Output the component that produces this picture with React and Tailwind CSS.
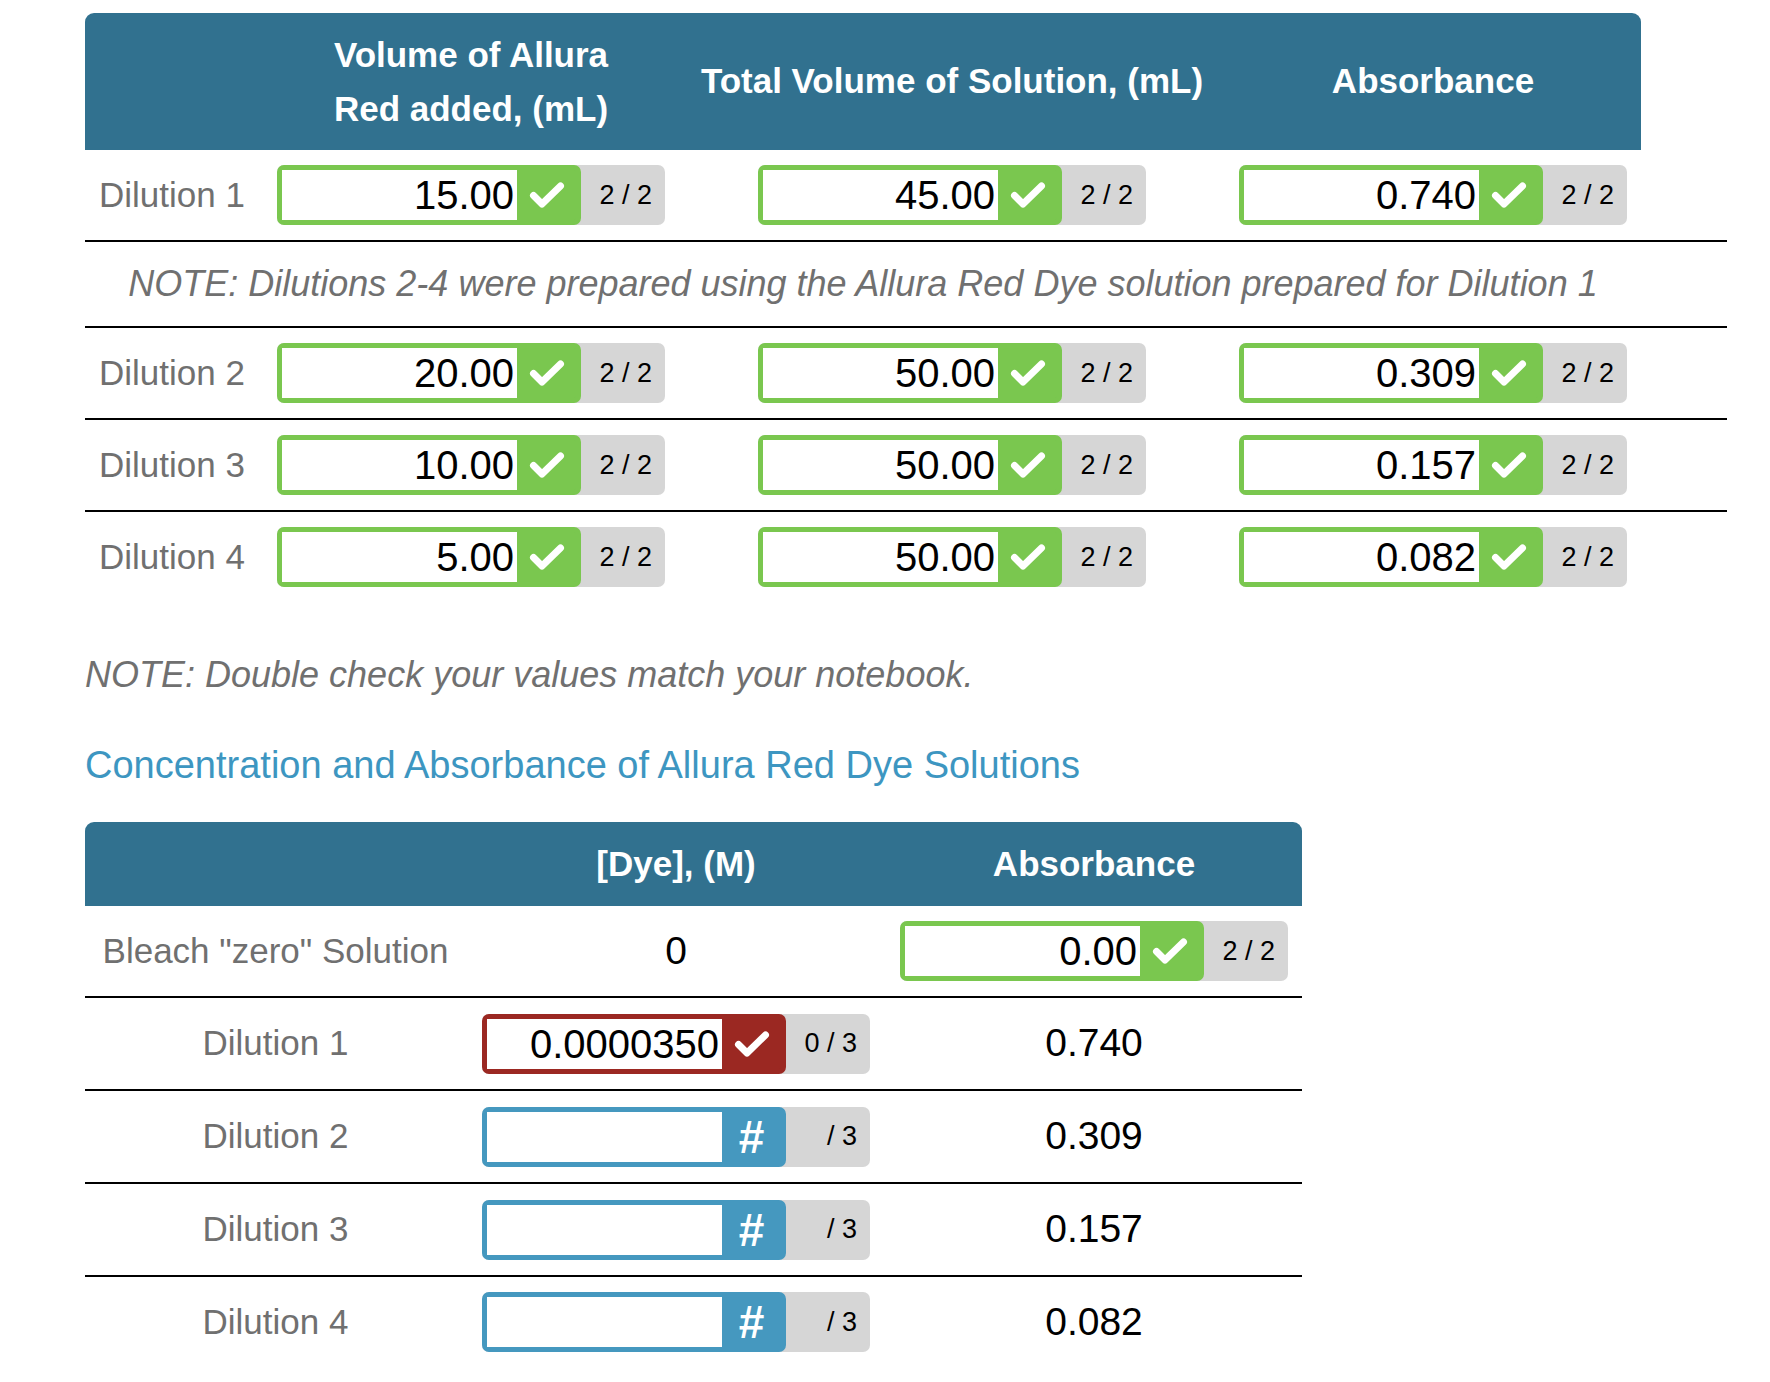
import React from "react";

const variants = {
  green: "border-[#7ac74f] bg-[#7ac74f]",
  red: "border-[#9b2822] bg-[#9b2822]",
  blue: "border-[#4598bf] bg-[#4598bf]",
};

function CheckIcon() {
  return (
    <svg width="36" height="28" viewBox="0 0 36 28">
      <polyline
        points="4.5,14.5 13,23 31.5,5"
        fill="none"
        stroke="white"
        strokeWidth="7"
        strokeLinecap="round"
        strokeLinejoin="round"
      />
    </svg>
  );
}

// input + feedback icon + score
function Answer({ value = "", variant = "green", score = "", max }) {
  return (
    <div className="flex h-[60px] w-[388px] shrink-0 rounded-[7px] bg-[#d6d6d6]">
      <div className={"flex w-[304px] h-full rounded-[7px] border-[5px] " + variants[variant]}>
        <div className="flex-1 bg-white flex items-center justify-end pr-[3px] text-[40px] leading-none text-black">
          {value}
        </div>
        <div className="w-[59px] flex items-center justify-center">
          {variant === "blue" ? (
            <span className="text-white font-bold text-[46px] leading-none">#</span>
          ) : (
            <CheckIcon />
          )}
        </div>
      </div>
      <div className="flex-1 flex items-center justify-end pr-[13px] text-[27px] text-black whitespace-pre">
        {score ? `${score} / ${max}` : `/ ${max}`}
      </div>
    </div>
  );
}

const dilutions = [
  { name: "Dilution 2", vol: "20.00", total: "50.00", abs: "0.309" },
  { name: "Dilution 3", vol: "10.00", total: "50.00", abs: "0.157" },
  { name: "Dilution 4", vol: "5.00", total: "50.00", abs: "0.082" },
];

function VolumeRow({ row, last }) {
  return (
    <div className={"flex items-center w-[1642px] " + (last ? "h-[90px]" : "h-[92px] border-b-2 border-black")}>
      <div className="w-[192px] pl-[14px] text-[35px] text-[#707070] whitespace-nowrap">{row.name}</div>
      <div className="flex gap-[93px]">
        <Answer value={row.vol} score="2" max="2" />
        <Answer value={row.total} score="2" max="2" />
        <Answer value={row.abs} score="2" max="2" />
      </div>
    </div>
  );
}

const concRows = [
  { name: "Dilution 1", value: "0.0000350", variant: "red", score: "0", abs: "0.740" },
  { name: "Dilution 2", value: "", variant: "blue", score: "", abs: "0.309" },
  { name: "Dilution 3", value: "", variant: "blue", score: "", abs: "0.157" },
  { name: "Dilution 4", value: "", variant: "blue", score: "", abs: "0.082" },
];

export default function App() {
  return (
    <div className="min-h-screen bg-white pt-[13px] pl-[85px] font-['Liberation_Sans',Arial,sans-serif]">
      {/* Volumes table */}
      <div className="w-[1642px]">
        <div className="flex items-center w-[1556px] h-[137px] bg-[#31718f] rounded-t-[9px] text-white font-bold text-[35px]">
          <div className="w-[192px]" />
          <div className="flex items-center gap-[93px]">
            <div className="w-[388px] flex justify-center text-center leading-[54px] whitespace-nowrap">
              Volume of Allura
              <br />
              Red added, (mL)
            </div>
            <div className="w-[388px] flex justify-center whitespace-nowrap">Total Volume of Solution, (mL)</div>
            <div className="w-[388px] flex justify-center whitespace-nowrap">Absorbance</div>
          </div>
        </div>

        <VolumeRow row={{ name: "Dilution 1", vol: "15.00", total: "45.00", abs: "0.740" }} />

        <div className="flex items-center w-[1642px] h-[86px] border-b-2 border-black">
          <div className="w-[1556px] text-center italic text-[36px] text-[#707070] whitespace-nowrap">
            NOTE: Dilutions 2-4 were prepared using the Allura Red Dye solution prepared for Dilution 1
          </div>
        </div>

        {dilutions.map((d, i) => (
          <VolumeRow key={d.name} row={d} last={i === dilutions.length - 1} />
        ))}
      </div>

      <p className="mt-[52px] italic text-[36px] leading-[41px] text-[#707070]">
        NOTE: Double check your values match your notebook.
      </p>

      <h2 className="mt-[48px] text-[38px] leading-[44px] text-[#3d96c1]">
        Concentration and Absorbance of Allura Red Dye Solutions
      </h2>

      {/* Concentration table */}
      <div className="mt-[35px] w-[1217px]">
        <div className="flex items-center h-[84px] bg-[#31718f] rounded-t-[9px] text-white font-bold text-[35px]">
          <div className="w-[381px]" />
          <div className="w-[420px] flex justify-center">[Dye], (M)</div>
          <div className="w-[416px] flex justify-center">Absorbance</div>
        </div>

        <div className="flex items-center h-[92px] border-b-2 border-black">
          <div className="w-[381px] text-center text-[35px] text-[#707070] whitespace-nowrap">Bleach "zero" Solution</div>
          <div className="w-[420px] text-center text-[39px] text-black">0</div>
          <div className="w-[416px] flex justify-center">
            <Answer value="0.00" score="2" max="2" />
          </div>
        </div>

        {concRows.map((r, i) => (
          <div
            key={r.name}
            className={"flex items-center " + (i === concRows.length - 1 ? "h-[90px]" : "h-[93px] border-b-2 border-black")}
          >
            <div className="w-[381px] text-center text-[35px] text-[#707070]">{r.name}</div>
            <div className="w-[420px] flex justify-center">
              <Answer value={r.value} variant={r.variant} score={r.score} max="3" />
            </div>
            <div className="w-[416px] text-center text-[39px] text-black">{r.abs}</div>
          </div>
        ))}
      </div>
    </div>
  );
}
